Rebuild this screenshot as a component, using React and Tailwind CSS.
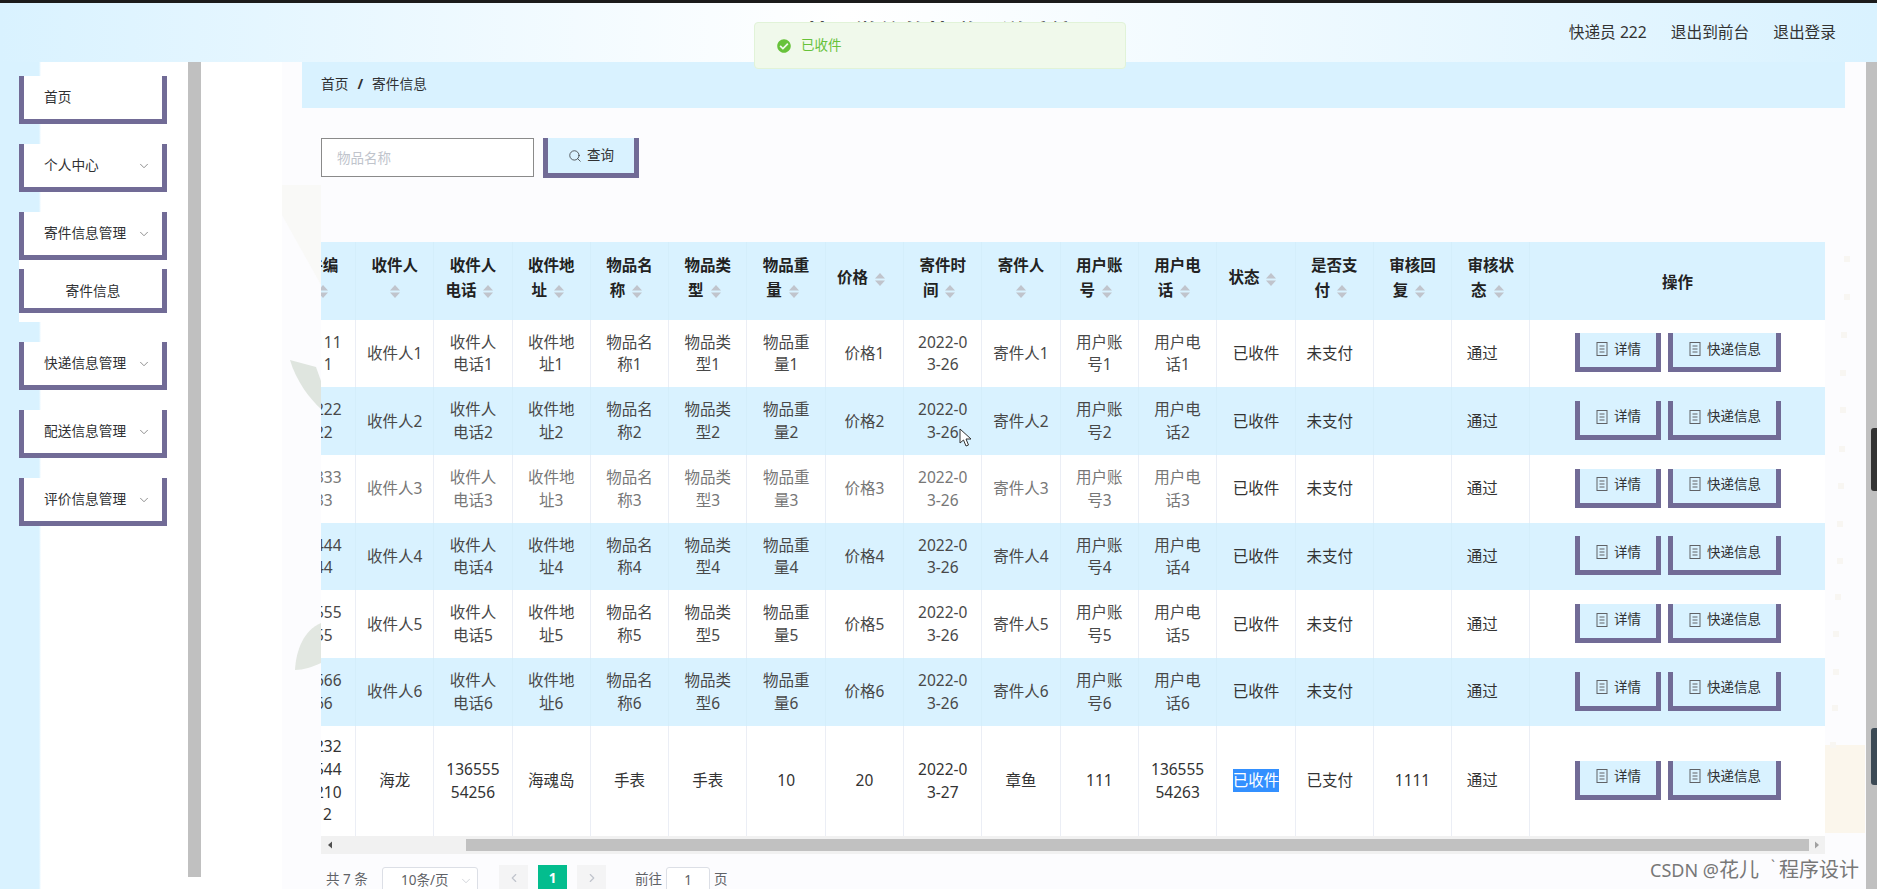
import { ChevronDown, ChevronLeft, ChevronRight, Search } from "lucide-react";
import { FaCheckCircle } from "react-icons/fa";

const menu = [
  { title: "首页" },
  { title: "个人中心", arrow: true },
  { title: "寄件信息管理", arrow: true, sub: "寄件信息" },
  { title: "快递信息管理", arrow: true },
  { title: "配送信息管理", arrow: true },
  { title: "评价信息管理", arrow: true },
];

const heads = [
  "收件人",
  "收件人电话",
  "收件地址",
  "物品名称",
  "物品类型",
  "物品重量",
  "价格",
  "寄件时间",
  "寄件人",
  "用户账号",
  "用户电话",
  "状态",
  "是否支付",
  "审核回复",
  "审核状态",
];

const rows = [1, 2, 3, 4, 5, 6].map((n) => ({
  n,
  id: [`${n}${n}${n}`, `${n}${n}`],
  cells: [
    `收件人${n}`,
    `收件人\n电话${n}`,
    `收件地\n址${n}`,
    `物品名\n称${n}`,
    `物品类\n型${n}`,
    `物品重\n量${n}`,
    `价格${n}`,
    "2022-0\n3-26",
    `寄件人${n}`,
    `用户账\n号${n}`,
    `用户电\n话${n}`,
    "已收件",
    "未支付",
    "",
    "通过",
  ],
}));

const lastRow = [
  "海龙",
  "136555\n54256",
  "海魂岛",
  "手表",
  "手表",
  "10",
  "20",
  "2022-0\n3-27",
  "章鱼",
  "111",
  "136555\n54263",
  "已收件",
  "已支付",
  "1111",
  "通过",
];

// dots of the page background, right of the table
const dots = [
  [1844, 256], [1844, 294], [1841, 332], [1840, 370], [1840, 407], [1839, 446], [1838, 483],
  [1837, 521], [1837, 558], [1835, 594], [1833, 631], [1833, 669], [1832, 705], [1830, 742],
];

const gridCols = "grid grid-cols-[35px_repeat(15,78.3px)_1fr]";

function SortCaret() {
  return (
    <span className="inline-flex h-[14px] w-[24px] items-center justify-center align-middle">
      <svg width="10" height="13" viewBox="0 0 10 13" fill="#c0c4cc">
        <path d="M5 0 L10 5.5 L0 5.5 Z" />
        <path d="M5 13 L10 7.5 L0 7.5 Z" />
      </svg>
    </span>
  );
}

function DocIcon() {
  return (
    <svg width="12" height="14" viewBox="0 0 12 14" fill="none" stroke="#606266" strokeWidth="1">
      <rect x="1" y="0.5" width="10" height="13" />
      <path d="M3.5 4 H8.5 M3.5 7 H8.5 M3.5 10 H8.5" />
    </svg>
  );
}

function ActionButton({ label, width }) {
  return (
    <button className={`flex h-[39px] items-center justify-center gap-[6px] border-x-[5px] border-b-[5px] border-[#716b96] bg-[#d9f2ff] pb-[3px] text-[13.5px] text-[#303133] ${width}`}>
      <DocIcon />
      {label}
    </button>
  );
}

function Actions() {
  return (
    <div className="flex items-center justify-center gap-[7px] pb-[1px] pl-[2px]">
      <ActionButton label="详情" width="w-[86px]" />
      <ActionButton label="快递信息" width="w-[113px]" />
    </div>
  );
}

function Cell({ i, blue, color, children }) {
  const border = blue ? "border-[#d4eefb]" : "border-[#ebeef5]";
  const align = i === 12 ? "justify-start pl-[11px] text-left" : i === 14 ? "justify-center pr-[25px] text-center" : "justify-center text-center";
  return (
    <div className={`flex items-center whitespace-pre-line border-r px-[8px] leading-[22.7px] ${border} ${align} ${color}`}>
      {children}
    </div>
  );
}

function FirstCell({ blue, lines, color }) {
  return (
    <div className={`flex items-center overflow-hidden border-r ${blue ? "border-[#d4eefb]" : "border-[#ebeef5]"} ${color}`}>
      <div className="ml-[-6px] leading-[22.7px]">
        {lines.map((l, i) => (
          <div key={i} className="whitespace-pre">{l}</div>
        ))}
      </div>
    </div>
  );
}

function Sidebar() {
  return (
    <aside className="flex w-[188px] shrink-0 flex-col gap-[20px] bg-[linear-gradient(to_right,#d9f2ff_39px,#ffffff_41px)] pl-[19px] pr-[21px] pt-[14px]">
      {menu.map((m) => (
        <div key={m.title}>
          <div className="flex h-[48px] items-center justify-between border-x-[5px] border-b-[5px] border-[#716b96] bg-white pl-[20px] pr-[11px] text-[13.7px] text-[#303133]">
            <span>{m.title}</span>
            {m.arrow && <ChevronDown size={14} strokeWidth={1.4} color="#777" />}
          </div>
          {m.sub && (
            <div className="h-[62px] bg-white pt-[9px]">
              <div className="flex h-[44px] items-center justify-center border-x-[5px] border-b-[5px] border-[#716b96] bg-white pt-[5px] text-[13.7px] text-[#303133]">
                {m.sub}
              </div>
            </div>
          )}
        </div>
      ))}
    </aside>
  );
}

function Table() {
  return (
    <div className="relative ml-[19px] mt-[64px] w-[1503.5px] text-[15.5px]">
      <div className={`${gridCols} h-[77.5px] bg-[#d9f2ff] font-bold leading-[25px] text-[#222]`}>
        <div className="flex items-center overflow-hidden border-r border-[#d4eefb]">
          <div className="ml-[-45px] flex w-[78px] shrink-0 justify-center">
            <div className="mb-[6px] w-[56px] text-center">
              寄件编号
              <SortCaret />
            </div>
          </div>
        </div>
        {heads.map((h) => (
          <div key={h} className="flex items-center justify-center border-r border-[#d4eefb]">
            <div className="mb-[6px] w-[56px] text-center">
              {h}
              <SortCaret />
            </div>
          </div>
        ))}
        <div className="flex items-center justify-center pt-[4px]">操作</div>
      </div>

      {rows.map((r) => {
        const blue = r.n % 2 === 0;
        const muted = r.n === 3 ? "text-[#777]" : "text-[#484848]";
        return (
          <div key={r.n} className={`${gridCols} h-[67.7px] ${blue ? "bg-[#d9f2ff]" : "bg-white"}`}>
            <FirstCell blue={blue} lines={r.id} color={muted} />
            {r.cells.map((c, i) => (
              <Cell key={i} i={i} blue={blue} color={i < 11 ? muted : "text-[#333]"}>
                {c}
              </Cell>
            ))}
            <Actions />
          </div>
        );
      })}

      <div className={`${gridCols} h-[110px] bg-white`}>
        <FirstCell lines={["232", "544", "210", "  2"]} color="text-[#333]" />
        {lastRow.map((c, i) => (
          <Cell key={i} i={i} color="text-[#333]">
            {i === 11 ? <span className="bg-[#3390ff] text-white">{c}</span> : c}
          </Cell>
        ))}
        <Actions />
      </div>

      <div className="flex h-[18px] items-center justify-between bg-[#f1f1f1]">
        <svg width="18" height="18" viewBox="0 0 18 18" fill="#505050">
          <path d="M7 9 L11 5.5 V12.5 Z" />
        </svg>
        <div className="ml-[127px] h-[12px] w-[1343px] bg-[#c1c1c1]" />
        <svg width="16" height="18" viewBox="0 0 16 18" fill="#a0a0a0">
          <path d="M10 9 L6 5.5 V12.5 Z" />
        </svg>
      </div>
    </div>
  );
}

function Pagination() {
  return (
    <div className="ml-[24px] mt-[11px] flex h-[25px] items-start text-[13.5px] text-[#606266]">
      <span className="mt-[4px] w-[56px] whitespace-pre">共 7 条</span>
      <div className="mt-[2px] flex h-[30px] w-[96px] items-start justify-between rounded-[3px] border border-[#dcdfe6] bg-white pl-[18px] pr-[4px] pt-[2px]">
        <span>10条/页</span>
        <ChevronDown size={14} strokeWidth={1.2} color="#c0c4cc" className="mt-[4px]" />
      </div>
      <div className="ml-[21px] flex h-[30px] w-[29px] items-start justify-center bg-[#f4f4f5] pt-[6px]">
        <ChevronLeft size={14} color="#c0c4cc" />
      </div>
      <div className="ml-[10px] flex h-[30px] w-[29px] items-start justify-center bg-[#03bd8e] pt-[3px] font-bold text-white">
        1
      </div>
      <div className="ml-[10px] flex h-[30px] w-[29px] items-start justify-center bg-[#f4f4f5] pt-[6px]">
        <ChevronRight size={14} color="#c0c4cc" />
      </div>
      <span className="ml-[29px] mt-[4px]">前往</span>
      <div className="ml-[4px] mt-[2px] flex h-[30px] w-[44px] items-start justify-center rounded-[3px] border border-[#dcdfe6] bg-white pt-[2px]">
        1
      </div>
      <span className="ml-[4px] mt-[4px]">页</span>
    </div>
  );
}

function Background() {
  return (
    <div className="absolute inset-0">
      <div className="absolute bottom-0 left-[282px] top-[62px] w-[1584px] bg-[#fcfcfe]" />
      <svg className="absolute left-[280px] top-[185px]" width="42" height="500" viewBox="0 0 42 500" fill="none">
        <path d="M2 0 L41 0 L41 100 L2 30 Z" fill="#f9f9f7" />
        <path d="M10 175 L36 182 L41 196 L41 224 C30 214 16 196 10 175 Z" fill="#dfe5df" />
        <path d="M15 485 C16 465 24 445 41 438 L41 478 C32 482 24 485 15 485 Z" fill="#e2e7e1" />
      </svg>
      <div className="absolute left-[1825px] top-[745px] h-[88px] w-[40px] bg-[#fbf6ec]" />
      {dots.map(([x, y]) => (
        <div key={y} className="absolute h-[6px] w-[6px] bg-[#f8f6f2]" style={{ left: x, top: y }} />
      ))}
    </div>
  );
}

export default function App() {
  return (
    <div className="relative flex h-screen w-full flex-col overflow-hidden bg-white font-['Noto_Sans','Noto_Sans_CJK_SC',sans-serif]">
      <Background />
      <div className="relative h-[3px] shrink-0 bg-[#1b1b1b]" />
      <header className="relative flex h-[59px] shrink-0 items-center bg-linear-to-r from-[#d9f2ff] via-white via-45% to-[#d9f2ff] pl-[805px] pr-[41px]">
        <h1 className="text-[24px] font-bold tracking-[0.5px] text-[#222]">基于微信的快递配送系统</h1>
        <div className="ml-auto flex items-center gap-[24px] text-[15.7px] text-[#333]">
          <span>快递员 222</span>
          <span>退出到前台</span>
          <span>退出登录</span>
        </div>
      </header>

      <div className="relative flex min-h-0 flex-1">
        <Sidebar />
        <div className="flex w-[13px] shrink-0 flex-col">
          <div className="h-[815px] bg-[#c0c0c0]" />
        </div>
        <main className="ml-[101px] min-w-0 flex-1">
          <div className="flex h-[46px] w-[1543px] items-center gap-[9px] bg-[#d9f2ff] pb-[1px] pl-[19px] text-[13.7px] text-[#303133]">
            <span>首页</span>
            <span className="font-bold">/</span>
            <span>寄件信息</span>
          </div>
          <div className="ml-[19px] mt-[30px] flex items-start gap-[9px]">
            <input
              className="h-[39px] w-[213px] border border-[#8a8a8a] bg-white pl-[15px] text-[13.5px] outline-none placeholder:text-[#c0c4cc]"
              placeholder="物品名称"
            />
            <button className="flex h-[40px] w-[96px] items-center justify-center gap-[5px] border-x-[5px] border-b-[5px] border-[#716b96] bg-[#d9f2ff] text-[13.5px] text-[#303133]">
              <Search size={14} strokeWidth={1.3} />
              查询
            </button>
          </div>
          <Table />
          <Pagination />
        </main>
        <div className="w-[11px] shrink-0 bg-[#c0c0c0]" />
      </div>

      <div className="absolute left-[754px] top-[22px] z-20 flex h-[47px] w-[372px] items-center gap-[10px] rounded-[4px] border border-[#e1f3d8] bg-[#f0f9eb] pl-[22px] text-[13.5px] text-[#67c23a]">
        <FaCheckCircle size={14} color="#67c23a" />
        已收件
      </div>

      <svg className="absolute left-[959px] top-[428px] z-20" width="13" height="20" viewBox="0 0 13 20">
        <path d="M1 1 L1 15 L4.5 12 L7 18 L9.5 17 L7 11 L12 11 Z" fill="#fff" stroke="#333" strokeWidth="1" />
      </svg>

      <div className="absolute left-[1650px] top-[855px] z-20 whitespace-pre text-[18px] text-[#777]">
        CSDN @<span className="text-[20px]">花儿</span>
        <span className="ml-[12px] mr-[4px] align-top text-[14px]">`</span>
        <span className="text-[20px]">程序设计</span>
      </div>
      <div className="absolute left-[1871px] top-[428px] z-20 h-[63px] w-[6px] rounded-l-[3px] bg-[#333]" />
      <div className="absolute left-[1871px] top-[728px] z-20 h-[57px] w-[6px] rounded-l-[3px] bg-[#3c4a55]" />
    </div>
  );
}
